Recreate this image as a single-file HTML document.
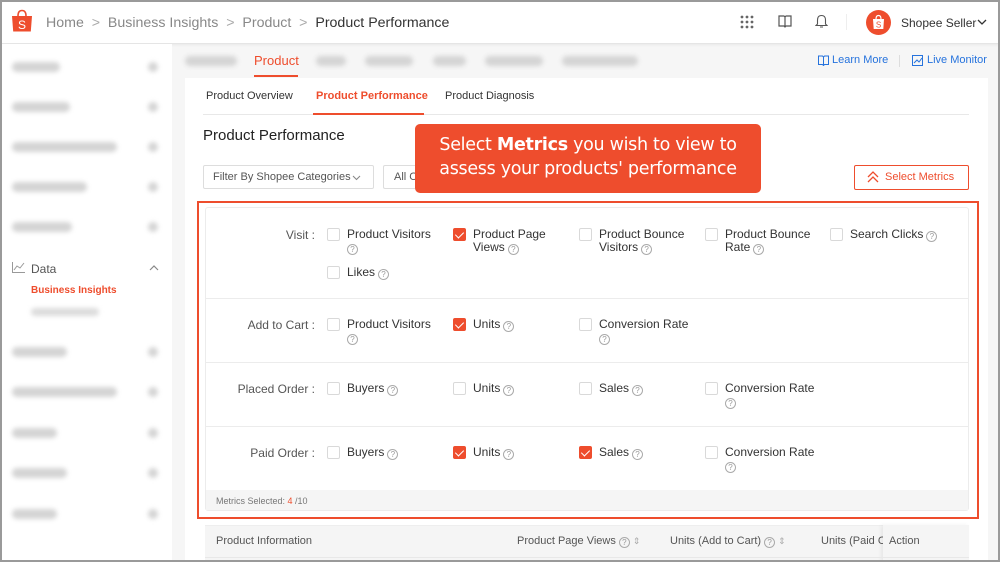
<!DOCTYPE html>
<html><head><meta charset="utf-8"><style>
*{margin:0;padding:0;box-sizing:border-box}
body{width:1000px;height:562px;overflow:hidden;font-family:"Liberation Sans",Arial,sans-serif;background:#f6f6f6;position:relative;color:#333}
.frame{position:absolute;inset:0;border:2px solid #9a9a9a;pointer-events:none;z-index:50}
.top{position:absolute;left:0;top:0;width:1000px;height:44px;background:#fff;border-bottom:1px solid #e5e5e5;box-shadow:0 1px 3px rgba(0,0,0,.06)}
.side{position:absolute;left:0;top:44px;width:172px;height:518px;background:#fff}
.blur{position:absolute;background:#d4d4d4;border-radius:6px;filter:blur(2.5px)}
.abs{position:absolute;white-space:nowrap}
.card{position:absolute;left:185px;top:78px;width:803px;height:484px;background:#fff}
.cb{position:absolute;width:13px;height:13px;border:1px solid #d9d9d9;border-radius:2px;background:#fff}
.cb.on{background:#ee4d2d;border-color:#ee4d2d}
.cb.on:after{content:"";position:absolute;left:3px;top:1px;width:4px;height:7px;border:solid #fff;border-width:0 1.5px 1.5px 0;transform:rotate(45deg)}
.t{position:absolute;font-size:12px;color:#333;line-height:13px}
.q{display:inline-block;width:11px;height:11px;border:1px solid #aaa;border-radius:50%;font-size:8px;line-height:9px;text-align:center;color:#999;vertical-align:-1px;margin-left:3px}
.lbl{position:absolute;font-size:12px;color:#555;text-align:right;width:120px;left:195px}
.hr{position:absolute;left:205px;width:763px;height:1px;background:#ececec}
</style></head><body>
<div class="top">
 <svg class="abs" style="left:11px;top:9px" width="22" height="24" viewBox="0 0 22 24"><path d="M1 7h20l-1.2 15.5H2.2z" fill="#ee4d2d"/><path d="M7 7c0-4 1.5-5.5 4-5.5S15 3 15 7" fill="none" stroke="#ee4d2d" stroke-width="1.6"/><text x="11" y="20" font-size="12" fill="#fff" text-anchor="middle" font-family="Liberation Sans">S</text></svg>
 <div class="abs" style="left:46px;top:15px;font-size:14.2px;color:#888">Home &nbsp;<span style="color:#aaa">&gt;</span>&nbsp; Business Insights &nbsp;<span style="color:#aaa">&gt;</span>&nbsp; Product &nbsp;<span style="color:#aaa">&gt;</span>&nbsp; <span style="color:#333">Product Performance</span></div>
 <svg class="abs" style="left:740px;top:15px" width="14" height="14"><g fill="#666"><circle cx="2" cy="2" r="1.4"/><circle cx="7" cy="2" r="1.4"/><circle cx="12" cy="2" r="1.4"/><circle cx="2" cy="7" r="1.4"/><circle cx="7" cy="7" r="1.4"/><circle cx="12" cy="7" r="1.4"/><circle cx="2" cy="12" r="1.4"/><circle cx="7" cy="12" r="1.4"/><circle cx="12" cy="12" r="1.4"/></g></svg>
 <svg class="abs" style="left:778px;top:15px" width="14" height="13"><path d="M1 1h5l1 1 1-1h5v10H8l-1 1-1-1H1z M7 2v10" fill="none" stroke="#555" stroke-width="1.2"/></svg>
 <svg class="abs" style="left:815px;top:14px" width="13" height="15"><path d="M6.5 1.5c-3 0-4 2-4 4.5v4L1 11.5h11L10.5 10V6c0-2.5-1-4.5-4-4.5zM5 13h3" fill="none" stroke="#555" stroke-width="1.1"/></svg>
 <div class="abs" style="left:846px;top:14px;width:1px;height:16px;background:#eee"></div>
 <div class="abs" style="left:866px;top:10px;width:25px;height:25px;border-radius:50%;background:#ee4d2d"></div>
 <svg class="abs" style="left:872px;top:14px" width="13" height="16" viewBox="0 0 13 16"><path d="M1 5h11l-.7 10H1.7z" fill="#fff"/><path d="M4 5c0-2.5 1-3.5 2.5-3.5S9 2.5 9 5" fill="none" stroke="#fff" stroke-width="1.2"/><text x="6.5" y="13.5" font-size="8" fill="#ee4d2d" text-anchor="middle" font-family="Liberation Sans">S</text></svg>
 <div class="abs" style="left:901px;top:16px;font-size:12px;color:#333">Shopee Seller</div>
 <svg class="abs" style="left:977px;top:19px" width="10" height="7"><path d="M1 1l4 4 4-4" fill="none" stroke="#333" stroke-width="1.3"/></svg>
</div>
<div class="side">
 <div class="blur" style="left:12px;top:18px;width:48px;height:10px"></div><div class="blur" style="left:148px;top:18px;width:10px;height:10px"></div>
 <div class="blur" style="left:12px;top:58px;width:58px;height:10px"></div><div class="blur" style="left:148px;top:58px;width:10px;height:10px"></div>
 <div class="blur" style="left:12px;top:98px;width:105px;height:10px"></div><div class="blur" style="left:148px;top:98px;width:10px;height:10px"></div>
 <div class="blur" style="left:12px;top:138px;width:75px;height:10px"></div><div class="blur" style="left:148px;top:138px;width:10px;height:10px"></div>
 <div class="blur" style="left:12px;top:178px;width:60px;height:10px"></div><div class="blur" style="left:148px;top:178px;width:10px;height:10px"></div>
 <svg class="abs" style="left:12px;top:218px" width="13" height="11"><path d="M.5 0v10.5H13M2 8l3-4 3 2 4-5" fill="none" stroke="#999" stroke-width="1"/></svg>
 <div class="abs" style="left:31px;top:218px;font-size:12px;color:#555">Data</div>
 <svg class="abs" style="left:149px;top:221px" width="10" height="6"><path d="M1 5l4-4 4 4" fill="none" stroke="#888" stroke-width="1.2"/></svg>
 <div class="abs" style="left:31px;top:241px;font-size:10px;color:#ee4d2d;font-weight:bold">Business Insights</div>
 <div class="blur" style="left:31px;top:264px;width:68px;height:8px;background:#dcdcdc"></div>
 <div class="blur" style="left:12px;top:303px;width:55px;height:10px"></div><div class="blur" style="left:148px;top:303px;width:10px;height:10px"></div>
 <div class="blur" style="left:12px;top:343px;width:105px;height:10px"></div><div class="blur" style="left:148px;top:343px;width:10px;height:10px"></div>
 <div class="blur" style="left:12px;top:384px;width:45px;height:10px"></div><div class="blur" style="left:148px;top:384px;width:10px;height:10px"></div>
 <div class="blur" style="left:12px;top:424px;width:55px;height:10px"></div><div class="blur" style="left:148px;top:424px;width:10px;height:10px"></div>
 <div class="blur" style="left:12px;top:465px;width:45px;height:10px"></div><div class="blur" style="left:148px;top:465px;width:10px;height:10px"></div>
</div>
<div class="blur" style="left:185px;top:56px;width:52px;height:10px"></div>
<div class="abs" style="left:254px;top:53px;font-size:13px;color:#ee4d2d">Product</div>
<div class="abs" style="left:254px;top:75px;width:44px;height:2px;background:#ee4d2d"></div>
<div class="blur" style="left:316px;top:56px;width:30px;height:10px"></div>
<div class="blur" style="left:365px;top:56px;width:48px;height:10px"></div>
<div class="blur" style="left:433px;top:56px;width:33px;height:10px"></div>
<div class="blur" style="left:485px;top:56px;width:58px;height:10px"></div>
<div class="blur" style="left:562px;top:56px;width:76px;height:10px"></div>
<svg class="abs" style="left:818px;top:55px" width="11" height="11"><path d="M.5 1h4l1 1 1-1h4v8.5h-4l-1 1-1-1h-4zM5.5 2v8" fill="none" stroke="#2673dd" stroke-width="1"/></svg>
<div class="abs" style="left:832px;top:54px;font-size:11px;color:#2673dd">Learn More</div>
<div class="abs" style="left:899px;top:55px;width:1px;height:12px;background:#ddd"></div>
<svg class="abs" style="left:912px;top:55px" width="11" height="11"><path d="M.5 .5h10v10H.5zM2 8l3-3 2 2 3-4" fill="none" stroke="#2673dd" stroke-width="1"/></svg>
<div class="abs" style="left:927px;top:54px;font-size:11px;color:#2673dd">Live Monitor</div>
<div class="card"></div>
<div class="abs" style="left:206px;top:90px;font-size:11px;color:#333">Product Overview</div>
<div class="abs" style="left:316px;top:90px;font-size:11px;color:#ee4d2d;font-weight:bold">Product Performance</div>
<div class="abs" style="left:445px;top:90px;font-size:11px;color:#333">Product Diagnosis</div>
<div class="abs" style="left:203px;top:114px;width:766px;height:1px;background:#e8e8e8"></div>
<div class="abs" style="left:313px;top:113px;width:111px;height:2px;background:#ee4d2d"></div>
<div class="abs" style="left:203px;top:127px;font-size:15px;color:#222">Product Performance</div>
<div class="abs" style="left:203px;top:165px;width:171px;height:24px;border:1px solid #ddd;border-radius:2px"></div>
<div class="abs" style="left:213px;top:171px;font-size:11px;color:#555">Filter By Shopee Categories</div>
<svg class="abs" style="left:352px;top:175px" width="9" height="6"><path d="M1 1l3.5 3.5L8 1" fill="none" stroke="#888" stroke-width="1.1"/></svg>
<div class="abs" style="left:383px;top:165px;width:40px;height:24px;border:1px solid #ddd;border-right:none;border-radius:2px"></div>
<div class="abs" style="left:394px;top:171px;font-size:11px;color:#555">All C</div>
<div class="abs" style="left:415px;top:124px;width:346px;height:69px;background:#ee4d2d;border-radius:5px;color:#fff;font-size:17.5px;text-align:center;line-height:24px;padding-top:9px;font-family:'DejaVu Sans','Liberation Sans',sans-serif;letter-spacing:-.3px">Select <b>Metrics</b> you wish to view to<br>assess your products' performance</div>
<div class="abs" style="left:854px;top:165px;width:115px;height:25px;border:1px solid #ee4d2d;border-radius:2px"></div>
<svg class="abs" style="left:866px;top:170px" width="14" height="14"><path d="M2 7l5-5 5 5M2 12l5-5 5 5" fill="none" stroke="#ee4d2d" stroke-width="1.3"/></svg>
<div class="abs" style="left:885px;top:171px;font-size:11px;color:#ee4d2d">Select Metrics</div>
<div class="abs" style="left:197px;top:201px;width:782px;height:318px;border:2px solid #ee4d2d"></div>
<div class="abs" style="left:205px;top:207px;width:764px;height:304px;border:1px solid #ececec;border-radius:3px"></div>
<div class="hr" style="top:298px"></div><div class="hr" style="top:362px"></div><div class="hr" style="top:426px"></div>
<div class="abs" style="left:206px;top:490px;width:762px;height:20px;background:#f5f5f5"></div>
<div class="abs" style="left:216px;top:496px;font-size:9px;color:#777">Metrics Selected: <span style="color:#ee4d2d">4</span> /10</div>

<div class="lbl" style="top:228px">Visit :</div>
<div class="cb" style="left:327px;top:228px"></div><div class="t" style="left:347px;top:228px">Product Visitors<br><span class="q" style="margin:0">?</span></div>
<div class="cb on" style="left:453px;top:228px"></div><div class="t" style="left:473px;top:228px">Product Page<br>Views<span class="q">?</span></div>
<div class="cb" style="left:579px;top:228px"></div><div class="t" style="left:599px;top:228px">Product Bounce<br>Visitors<span class="q">?</span></div>
<div class="cb" style="left:705px;top:228px"></div><div class="t" style="left:725px;top:228px">Product Bounce<br>Rate<span class="q">?</span></div>
<div class="cb" style="left:830px;top:228px"></div><div class="t" style="left:850px;top:228px">Search Clicks<span class="q">?</span></div>
<div class="cb" style="left:327px;top:266px"></div><div class="t" style="left:347px;top:266px">Likes<span class="q">?</span></div>

<div class="lbl" style="top:318px">Add to Cart :</div>
<div class="cb" style="left:327px;top:318px"></div><div class="t" style="left:347px;top:318px">Product Visitors<br><span class="q" style="margin:0">?</span></div>
<div class="cb on" style="left:453px;top:318px"></div><div class="t" style="left:473px;top:318px">Units<span class="q">?</span></div>
<div class="cb" style="left:579px;top:318px"></div><div class="t" style="left:599px;top:318px">Conversion Rate<br><span class="q" style="margin:0">?</span></div>

<div class="lbl" style="top:382px">Placed Order :</div>
<div class="cb" style="left:327px;top:382px"></div><div class="t" style="left:347px;top:382px">Buyers<span class="q">?</span></div>
<div class="cb" style="left:453px;top:382px"></div><div class="t" style="left:473px;top:382px">Units<span class="q">?</span></div>
<div class="cb" style="left:579px;top:382px"></div><div class="t" style="left:599px;top:382px">Sales<span class="q">?</span></div>
<div class="cb" style="left:705px;top:382px"></div><div class="t" style="left:725px;top:382px">Conversion Rate<br><span class="q" style="margin:0">?</span></div>

<div class="lbl" style="top:446px">Paid Order :</div>
<div class="cb" style="left:327px;top:446px"></div><div class="t" style="left:347px;top:446px">Buyers<span class="q">?</span></div>
<div class="cb on" style="left:453px;top:446px"></div><div class="t" style="left:473px;top:446px">Units<span class="q">?</span></div>
<div class="cb on" style="left:579px;top:446px"></div><div class="t" style="left:599px;top:446px">Sales<span class="q">?</span></div>
<div class="cb" style="left:705px;top:446px"></div><div class="t" style="left:725px;top:446px">Conversion Rate<br><span class="q" style="margin:0">?</span></div>
<div class="abs" style="left:205px;top:525px;width:764px;height:37px;background:#f5f5f5;border-top:1px solid #eee"></div>
<div class="abs" style="left:216px;top:535px;font-size:11px;color:#555">Product Information</div>
<div class="abs" style="left:517px;top:535px;font-size:11px;color:#555">Product Page Views<span class="q">?</span> <span style="color:#aaa;font-size:9px">⇕</span></div>
<div class="abs" style="left:670px;top:535px;font-size:11px;color:#555">Units (Add to Cart)<span class="q">?</span> <span style="color:#aaa;font-size:9px">⇕</span></div>
<div class="abs" style="left:821px;top:535px;font-size:11px;color:#555">Units (Paid O</div>
<div class="abs" style="left:883px;top:525px;width:86px;height:37px;background:#f5f5f5;box-shadow:-2px 0 4px rgba(0,0,0,.06)"></div>
<div class="abs" style="left:889px;top:535px;font-size:11px;color:#555">Action</div>
<div class="abs" style="left:205px;top:557px;width:764px;height:1px;background:#e8e8e8"></div>
<div class="frame"></div>
</body></html>
